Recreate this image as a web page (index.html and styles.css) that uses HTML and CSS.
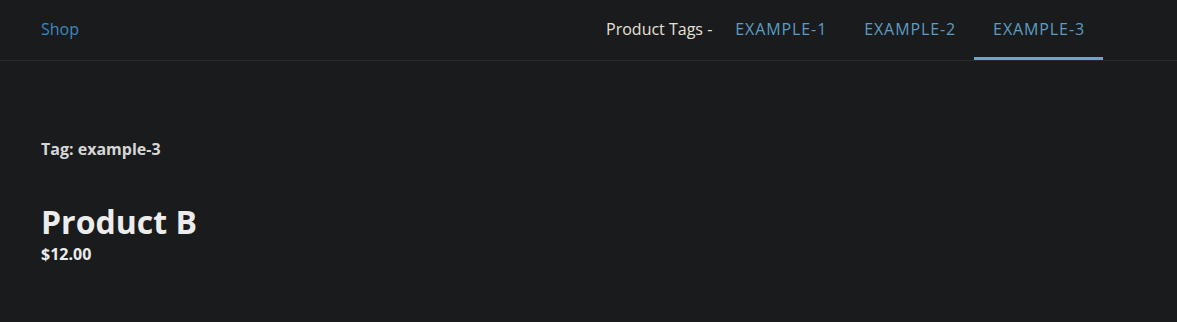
FILE: index.html
```html
<!DOCTYPE html>
<html lang="en">

<head>
    <meta charset="UTF-8">
    <meta name="viewport" content="width=device-width, initial-scale=1.0">
    <title>Tag: example-3</title>
    <link rel="stylesheet" href="styles.css">
</head>

<body>
    <div class="nav">
        <a class="brand" href="#">Shop</a>
        <div class="tags">
            <span class="tags-label">Product Tags -</span>
            <a class="tag-link" href="#">EXAMPLE-1</a>
            <a class="tag-link" href="#">EXAMPLE-2</a>
            <a class="tag-link active" href="#">EXAMPLE-3</a>
        </div>
    </div>

    <div class="container">
        <h3 class="tag-title">Tag: example-3</h3>

        <div class="product">
            <h2 class="product-name">Product B</h2>
            <p class="product-price">$12.00</p>
        </div>
    </div>
</body>

</html>
```

FILE: styles.css
```css
body {
    margin: 0;
    font-family: 'Open Sans', 'Noto Sans', sans-serif;
    background-color: #1a1b1d;
    color: #e6e6e6;
}

.nav {
    display: flex;
    justify-content: space-between;
    align-items: stretch;
    height: 61px;
    padding: 0 74px 0 41px;
    border-bottom: 1px solid #27292c;
    box-sizing: border-box;
}

.brand {
    display: flex;
    align-items: center;
    padding-bottom: 2px;
    text-decoration: none;
    color: #3f88c0;
    font-size: 16px;
}

.tags {
    display: flex;
    align-items: stretch;
}

.tags-label {
    display: flex;
    align-items: center;
    padding-bottom: 2px;
    font-size: 16px;
    color: #e4e0d8;
    padding-right: 4px;
}

.tag-link {
    display: flex;
    align-items: center;
    padding: 0 18px 0 19px;
    text-decoration: none;
    color: #5d9dc2;
    font-size: 16px;
    letter-spacing: 0.9px;
    border-bottom: 3px solid transparent;
}

.tag-link.active {
    border-bottom-color: #6aa8c8;
}

.container {
    padding: 77px 41px 0;
}

.tag-title {
    margin: 0;
    font-size: 16px;
    font-weight: 700;
    color: #d6d6d6;
}

.product {
    margin-top: 41px;
}

.product-name {
    margin: 0;
    font-size: 32px;
    font-weight: 700;
    line-height: 1.3;
    color: #ececec;
}

.product-price {
    margin: 0;
    font-size: 16px;
    font-weight: 700;
    color: #ececec;
}
```
